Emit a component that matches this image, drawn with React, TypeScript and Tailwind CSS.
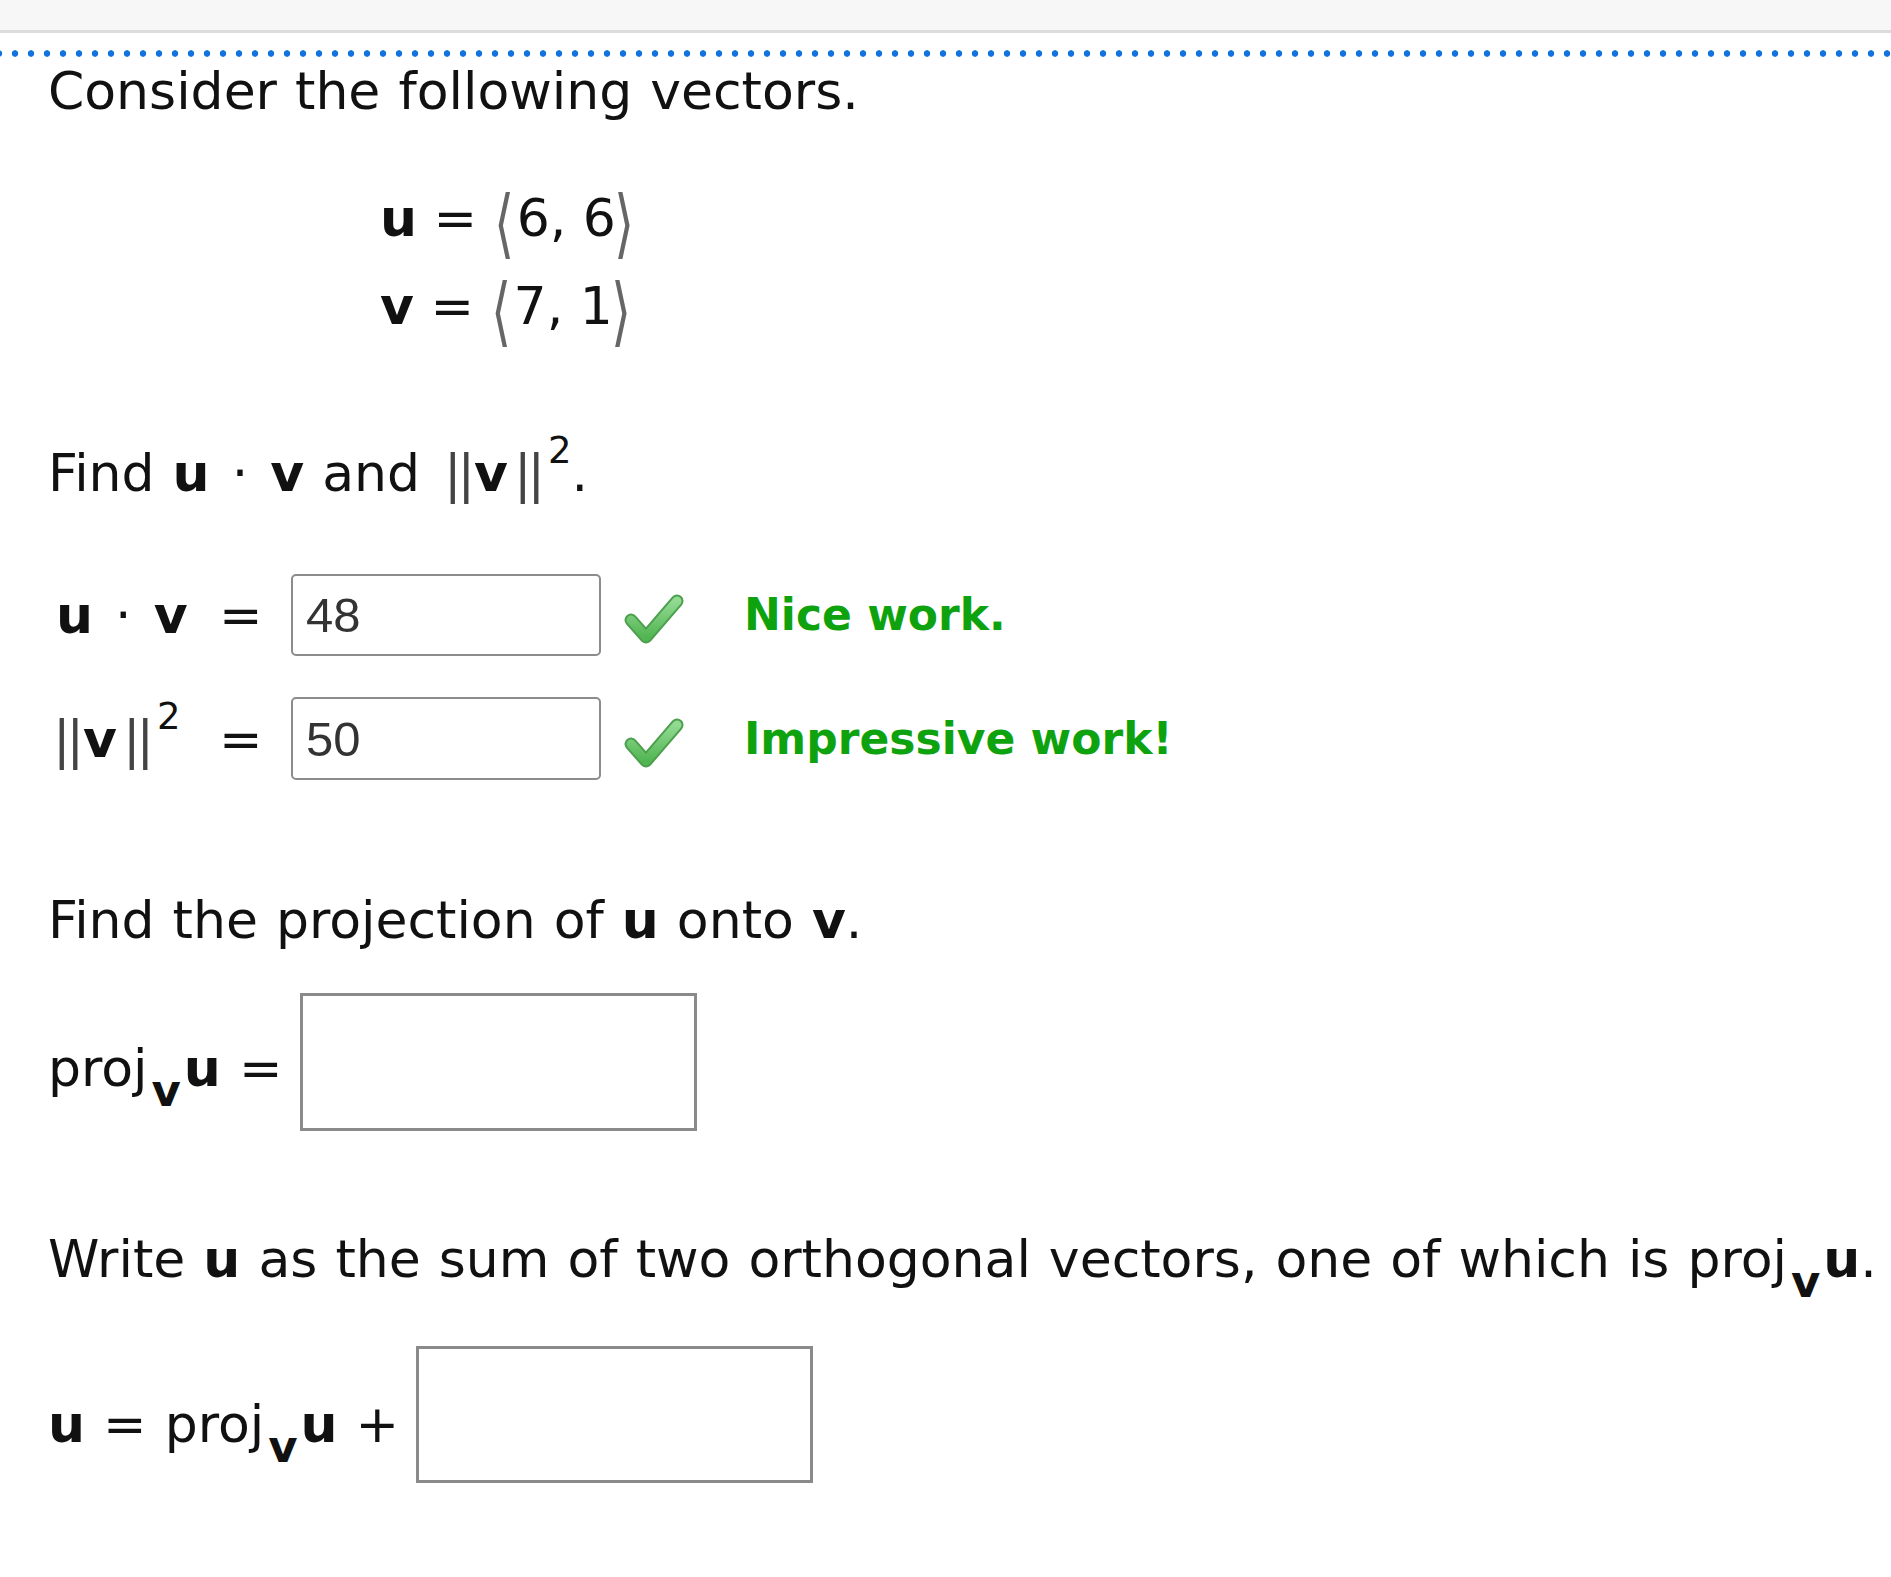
import React from "react";

const Bold = ({ children }: { children: React.ReactNode }) => (
  <span className="font-bold">{children}</span>
);

// stretched angle bracket used around vector components
const Angle = ({ side }: { side: "l" | "r" }) => (
  <span
    className={`inline-block origin-[50%_50%] translate-y-[5px] scale-y-[1.45] font-light text-[#666] ${
      side === "l" ? "mr-[3px]" : "-ml-[2px]"
    }`}
  >
    {side === "l" ? "⟨" : "⟩"}
  </span>
);

const Sub = ({ children }: { children: React.ReactNode }) => (
  <span className="relative top-[20px] ml-[4px] mr-[3px] text-[45px] font-bold leading-none">
    {children}
  </span>
);

const Sup = ({ children }: { children: React.ReactNode }) => (
  <span className="relative -top-[28px] text-[37px] leading-none">{children}</span>
);

// u · v
const DotProduct = () => (
  <span className="whitespace-nowrap">
    <Bold>u</Bold> <span className="mx-[4px]">·</span> <Bold>v</Bold>
  </span>
);

const Bars = () => <span className="tracking-[-4px] text-[#444]">||</span>;

const NormV = ({ className = "" }: { className?: string }) => (
  <span className={`whitespace-nowrap [word-spacing:0] ${className}`}>
    <Bars />
    <span className="ml-[3px] mr-[6px]">
      <Bold>v</Bold>
    </span>
    <Bars />
    <span className="ml-[7px]">
      <Sup>2</Sup>
    </span>
  </span>
);

function Check() {
  return (
    <svg width="61" height="52" viewBox="0 0 61 52" className="shrink-0">
      <defs>
        <linearGradient id="chk" x1="0" y1="0" x2="0" y2="1">
          <stop offset="0" stopColor="#92da92" />
          <stop offset="1" stopColor="#52b552" />
        </linearGradient>
      </defs>
      <path
        d="M8 27 L23 44 L54 8"
        fill="none"
        stroke="#4c9f4c"
        strokeWidth="13"
        strokeLinecap="round"
        strokeLinejoin="round"
      />
      <path
        d="M8 27 L23 44 L54 8"
        fill="none"
        stroke="url(#chk)"
        strokeWidth="9"
        strokeLinecap="round"
        strokeLinejoin="round"
      />
    </svg>
  );
}

function AnswerRow({
  label,
  value,
  feedback,
  className,
}: {
  label: React.ReactNode;
  value: string;
  feedback: string;
  className: string;
}) {
  return (
    <div className={`flex items-center ${className}`}>
      <div className="w-[171px] whitespace-nowrap">{label}</div>
      <div className="w-[72px]">=</div>
      <div className="flex h-full w-[310px] items-center rounded-[5px] border-2 border-[#8c8c8c] px-[13px] font-['Liberation_Sans',Arial,sans-serif] text-[49px] text-[#333]">
        {value}
      </div>
      <div className="ml-[22px] mt-[8px]">
        <Check />
      </div>
      <div className="ml-[60px] text-[44px] font-bold text-[#0ea30e] [word-spacing:0]">
        {feedback}
      </div>
    </div>
  );
}

export default function App() {
  return (
    <div className="min-h-screen bg-white font-['DejaVu_Sans',Verdana,sans-serif] text-[52px] leading-[60px] text-[#111] [word-spacing:1.5px]">
      <div className="h-[33px] border-b-[3px] border-[#dcdcdc] bg-[#f7f7f7]" />
      <div className="mt-[17px] h-[7px] bg-[radial-gradient(circle,#1273dc_2.9px,transparent_3.6px)] bg-[length:16px_7px] bg-[position:-9px_0]" />

      <div className="pl-[48px]">
        <p className="mt-[4px] whitespace-nowrap">Consider the following vectors.</p>

        {/* Vectors */}
        <div className="mt-[67px] flex flex-col gap-[28px] pl-[332px] [word-spacing:0]">
          <div className="whitespace-nowrap">
            <Bold>u</Bold> = <Angle side="l" />6, 6<Angle side="r" />
          </div>
          <div className="whitespace-nowrap">
            <Bold>v</Bold> = <Angle side="l" />7, 1<Angle side="r" />
          </div>
        </div>

        <p className="mt-[107px] whitespace-nowrap">
          Find <DotProduct /> and <NormV className="ml-[6px]" />.
        </p>

        <AnswerRow
          className="mt-[71px] h-[82px]"
          label={
            <span className="pl-[8px]">
              <DotProduct />
            </span>
          }
          value="48"
          feedback="Nice work."
        />
        <AnswerRow
          className="mt-[41px] h-[83px]"
          label={<NormV className="pl-[5px]" />}
          value="50"
          feedback="Impressive work!"
        />

        <p className="mt-[110px] whitespace-nowrap">
          Find the projection of <Bold>u</Bold> onto <Bold>v</Bold>.
        </p>

        <div className="mt-[43px] flex items-start">
          <div className="mt-[45px] w-[252px] whitespace-nowrap">
            proj<Sub>v</Sub>
            <Bold>u</Bold> =
          </div>
          <div className="h-[138px] w-[397px] border-[3px] border-[#8a8a8a]" />
        </div>

        <p className="mt-[98px] whitespace-nowrap">
          Write <Bold>u</Bold> as the sum of two orthogonal vectors, one of which is proj<Sub>v</Sub>
          <Bold>u</Bold>.
        </p>

        <div className="mt-[57px] flex items-start">
          <div className="mt-[48px] w-[368px] whitespace-nowrap">
            <Bold>u</Bold> = proj<Sub>v</Sub>
            <Bold>u</Bold> +
          </div>
          <div className="h-[137px] w-[397px] border-[3px] border-[#8a8a8a]" />
        </div>
      </div>
    </div>
  );
}
